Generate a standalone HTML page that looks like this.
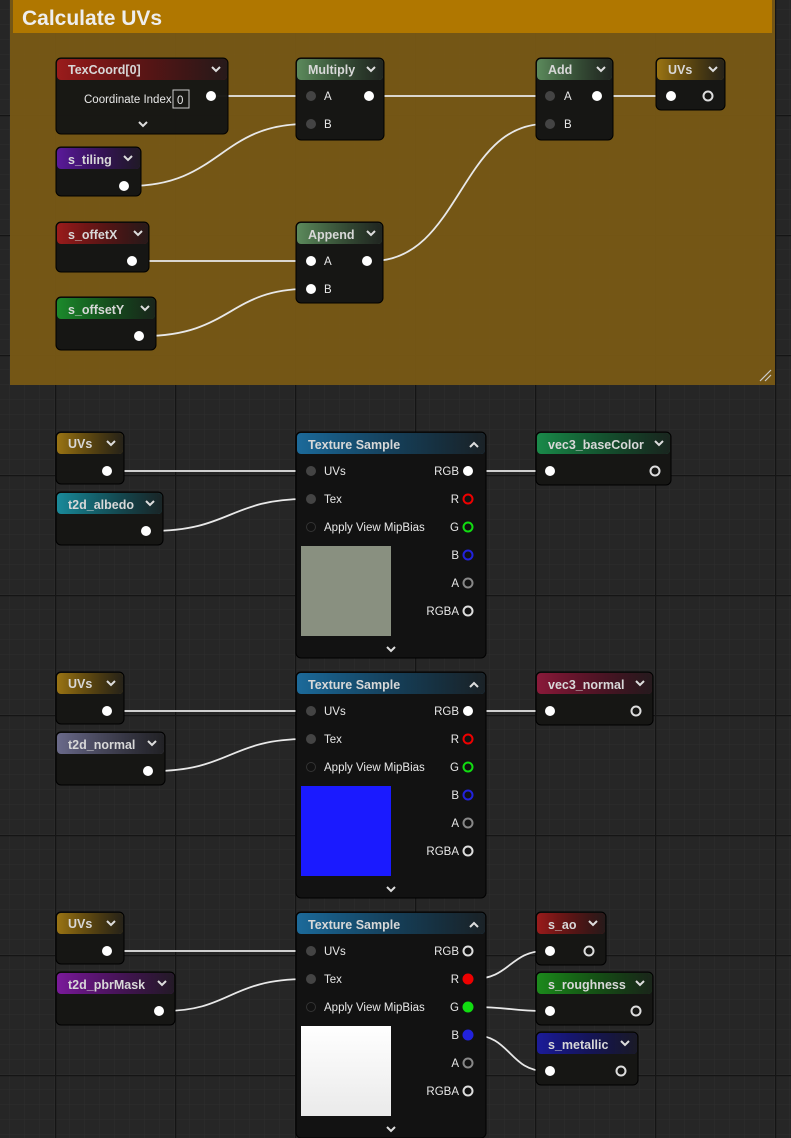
<!DOCTYPE html>
<html><head><meta charset="utf-8"><style>
html,body{margin:0;padding:0;background:#262626;width:791px;height:1138px;overflow:hidden}
svg{display:block;font-family:"Liberation Sans",sans-serif}
.t{fill:#d8d8d8;font-size:12.5px;font-weight:bold}
.l{fill:#e8e8e8;font-size:11.5px}
.w{fill:none;stroke:#e8e8e8;stroke-width:1.8}
</style></head><body>
<svg width="791" height="1138" viewBox="0 0 791 1138">
<defs>
<pattern id="g" width="15" height="15" patternUnits="userSpaceOnUse" x="10" y="10">
<path d="M15 0V15M0 15H15" stroke="#2e2e2e" stroke-width="1"/></pattern>
<pattern id="G" width="120" height="120" patternUnits="userSpaceOnUse" x="55" y="115">
<path d="M0.5 0V120M0 0.5H120" stroke="#151515" stroke-width="1.5"/></pattern>
<linearGradient id="fade" x1="0" x2="1"><stop offset="0" stop-color="#000" stop-opacity="0"/><stop offset="1" stop-color="#1a1a1a" stop-opacity="0.9"/></linearGradient>
</defs>
<rect width="791" height="1138" fill="#262626"/>
<rect width="791" height="1138" fill="url(#g)"/>
<rect width="791" height="1138" fill="url(#G)"/>
<!-- comment -->
<rect x="10" y="0" width="765" height="385" fill="#7b5a14" opacity="0.93"/>
<rect x="13" y="0" width="759" height="33" fill="#b07700"/>
<text x="22" y="25" fill="#eee" font-size="21" font-weight="bold">Calculate UVs</text>
<path d="M760 381L771 370M765 381L771 375" stroke="#ccc" stroke-width="1.2"/>

<g class="w">
<path d="M216 96H306"/>
<path d="M129 186C220 186 220 124 306 124"/>
<path d="M374 96H545"/>
<path d="M372 261C460 261 460 124 545 124"/>
<path d="M137 261H306"/>
<path d="M144 336C230 336 230 289 306 289"/>
<path d="M602 96H666"/>
<path d="M112 471H306"/>
<path d="M151 531C230 531 230 499 306 499"/>
<path d="M473 471H545"/>
<path d="M112 711H306"/>
<path d="M153 771C230 771 230 739 306 739"/>
<path d="M473 711H545"/>
<path d="M112 951H306"/>
<path d="M164 1011C230 1011 230 979 306 979"/>
<path d="M473 979C510 979 510 951 545 951"/>
<path d="M473 1007C510 1007 510 1011 545 1011"/>
<path d="M473 1035C510 1035 510 1071 545 1071"/>
</g>

<g id="nodes">
<rect x="56" y="58" width="172" height="76" rx="5" fill="#161614" stroke="#000" opacity="0.97"/>
<rect x="57" y="59" width="170" height="21" rx="4" fill="#9a1c1c"/><rect x="57" y="59" width="170" height="21" rx="4" fill="url(#fade)"/>
<text x="68" y="74" class="t">TexCoord[0]</text>
<text x="84" y="103" class="l">Coordinate Index</text>
<rect x="173" y="90" width="16" height="18" fill="none" stroke="#ccc"/><text x="177" y="104" class="l">0</text>
<rect x="296" y="58" width="88" height="82" rx="5" fill="#161614" stroke="#000"/>
<rect x="297" y="59" width="86" height="21" rx="4" fill="#5c8a5c"/><rect x="297" y="59" width="86" height="21" rx="4" fill="url(#fade)"/>
<text x="308" y="74" class="t">Multiply</text>
<text x="324" y="100" class="l">A</text><text x="324" y="128" class="l">B</text>
<rect x="56" y="147" width="85" height="49" rx="5" fill="#161614" stroke="#000"/>
<rect x="57" y="148" width="83" height="21" rx="4" fill="#5a1a9a"/><rect x="57" y="148" width="83" height="21" rx="4" fill="url(#fade)"/>
<text x="68" y="164" class="t">s_tiling</text>
<rect x="536" y="58" width="77" height="82" rx="5" fill="#161614" stroke="#000"/>
<rect x="537" y="59" width="75" height="21" rx="4" fill="#5c8a5c"/><rect x="537" y="59" width="75" height="21" rx="4" fill="url(#fade)"/>
<text x="548" y="74" class="t">Add</text>
<text x="564" y="100" class="l">A</text><text x="564" y="128" class="l">B</text>
<rect x="656" y="58" width="69" height="52" rx="5" fill="#161614" stroke="#000"/>
<rect x="657" y="59" width="67" height="21" rx="4" fill="#9a7414"/><rect x="657" y="59" width="67" height="21" rx="4" fill="url(#fade)"/>
<text x="668" y="74" class="t">UVs</text>
<rect x="56" y="222" width="93" height="50" rx="5" fill="#161614" stroke="#000"/>
<rect x="57" y="223" width="91" height="21" rx="4" fill="#9a1c1c"/><rect x="57" y="223" width="91" height="21" rx="4" fill="url(#fade)"/>
<text x="68" y="239" class="t">s_offetX</text>
<rect x="296" y="222" width="87" height="81" rx="5" fill="#161614" stroke="#000"/>
<rect x="297" y="223" width="85" height="21" rx="4" fill="#5c8a5c"/><rect x="297" y="223" width="85" height="21" rx="4" fill="url(#fade)"/>
<text x="308" y="239" class="t">Append</text>
<text x="324" y="265" class="l">A</text><text x="324" y="293" class="l">B</text>
<rect x="56" y="297" width="100" height="53" rx="5" fill="#161614" stroke="#000"/>
<rect x="57" y="298" width="98" height="21" rx="4" fill="#1c8a2c"/><rect x="57" y="298" width="98" height="21" rx="4" fill="url(#fade)"/>
<text x="68" y="314" class="t">s_offsetY</text>
</g>

<g id="grp">
<rect x="56" y="432" width="68" height="52" rx="5" fill="#161614" stroke="#000"/>
<rect x="57" y="433" width="66" height="21" rx="4" fill="#9a7414"/><rect x="57" y="433" width="66" height="21" rx="4" fill="url(#fade)"/>
<text x="68" y="448" class="t">UVs</text>
<rect x="296" y="432" width="190" height="226" rx="5" fill="#121212" stroke="#000"/>
<rect x="297" y="433" width="188" height="21" rx="4" fill="#1c6a9a"/><rect x="297" y="433" width="188" height="21" rx="4" fill="url(#fade)"/>
<text x="308" y="449" class="t">Texture Sample</text>
<path d="M470 447l4-4 4 4" stroke="#ddd" stroke-width="2" fill="none"/>
<text x="324" y="475" class="l">UVs</text>
<text x="324" y="503" class="l">Tex</text>
<text x="324" y="531" class="l">Apply View MipBias</text>
<text x="459" y="475" class="l" text-anchor="end">RGB</text>
<text x="459" y="503" class="l" text-anchor="end">R</text>
<text x="459" y="531" class="l" text-anchor="end">G</text>
<text x="459" y="559" class="l" text-anchor="end">B</text>
<text x="459" y="587" class="l" text-anchor="end">A</text>
<text x="459" y="615" class="l" text-anchor="end">RGBA</text>
<path d="M387 647l4 4 4-4" stroke="#ddd" stroke-width="2" fill="none"/>
<circle cx="311" cy="471" r="5" fill="#444"/><circle cx="311" cy="499" r="5" fill="#444"/>
<circle cx="311" cy="527" r="4.5" fill="#111" stroke="#333"/>
<circle cx="468" cy="471" r="5" fill="#fff"/>
<circle cx="468" cy="499" r="4.5" fill="none" stroke="#e00" stroke-width="2"/>
<circle cx="468" cy="527" r="4.5" fill="none" stroke="#1d1" stroke-width="2"/>
<circle cx="468" cy="555" r="4.5" fill="none" stroke="#22d" stroke-width="2"/>
<circle cx="468" cy="583" r="4.5" fill="none" stroke="#888" stroke-width="2"/>
<circle cx="468" cy="611" r="4.5" fill="none" stroke="#ddd" stroke-width="2"/>
<circle cx="107" cy="471" r="5" fill="#fff"/>
</g>
<use href="#grp" y="240"/>
<use href="#grp" y="480"/>
<rect x="301" y="546" width="90" height="90" fill="#899080"/>
<rect x="301" y="786" width="90" height="90" fill="#1a1aff"/>
<defs><linearGradient id="wg" x1="0" y1="0" x2="0" y2="1"><stop offset="0" stop-color="#fff"/><stop offset="1" stop-color="#eaeaea"/></linearGradient></defs>
<rect x="301" y="1026" width="90" height="90" fill="url(#wg)"/>
<circle cx="468" cy="979" r="5" fill="#e00"/><circle cx="468" cy="1007" r="5" fill="#1d1"/><circle cx="468" cy="1035" r="5" fill="#22d"/>
<circle cx="468" cy="951" r="4.5" fill="#121212" stroke="#ddd" stroke-width="2"/>

<g>
<rect x="56" y="492" width="107" height="53" rx="5" fill="#161614" stroke="#000"/>
<rect x="57" y="493" width="105" height="21" rx="4" fill="#1a8a9a"/><rect x="57" y="493" width="105" height="21" rx="4" fill="url(#fade)"/>
<text x="68" y="509" class="t">t2d_albedo</text>
<rect x="56" y="732" width="109" height="53" rx="5" fill="#161614" stroke="#000"/>
<rect x="57" y="733" width="107" height="21" rx="4" fill="#6a6a8a"/><rect x="57" y="733" width="107" height="21" rx="4" fill="url(#fade)"/>
<text x="68" y="749" class="t">t2d_normal</text>
<rect x="56" y="972" width="119" height="53" rx="5" fill="#161614" stroke="#000"/>
<rect x="57" y="973" width="117" height="21" rx="4" fill="#7a1a9a"/><rect x="57" y="973" width="117" height="21" rx="4" fill="url(#fade)"/>
<text x="68" y="989" class="t">t2d_pbrMask</text>
<rect x="536" y="432" width="135" height="53" rx="5" fill="#161614" stroke="#000"/>
<rect x="537" y="433" width="133" height="21" rx="4" fill="#1a8a4a"/><rect x="537" y="433" width="133" height="21" rx="4" fill="url(#fade)"/>
<text x="548" y="449" class="t">vec3_baseColor</text>
<rect x="536" y="672" width="117" height="53" rx="5" fill="#161614" stroke="#000"/>
<rect x="537" y="673" width="115" height="21" rx="4" fill="#8a1a3a"/><rect x="537" y="673" width="115" height="21" rx="4" fill="url(#fade)"/>
<text x="548" y="689" class="t">vec3_normal</text>
<rect x="536" y="912" width="70" height="53" rx="5" fill="#161614" stroke="#000"/>
<rect x="537" y="913" width="68" height="21" rx="4" fill="#9a1c1c"/><rect x="537" y="913" width="68" height="21" rx="4" fill="url(#fade)"/>
<text x="548" y="929" class="t">s_ao</text>
<rect x="536" y="972" width="117" height="53" rx="5" fill="#161614" stroke="#000"/>
<rect x="537" y="973" width="115" height="21" rx="4" fill="#1c8a1c"/><rect x="537" y="973" width="115" height="21" rx="4" fill="url(#fade)"/>
<text x="548" y="989" class="t">s_roughness</text>
<rect x="536" y="1032" width="102" height="53" rx="5" fill="#161614" stroke="#000"/>
<rect x="537" y="1033" width="100" height="21" rx="4" fill="#1c1c9a"/><rect x="537" y="1033" width="100" height="21" rx="4" fill="url(#fade)"/>
<text x="548" y="1049" class="t">s_metallic</text>
</g>

<g stroke="#ddd" stroke-width="2" fill="none">
<path d="M212 67l4 4 4-4M367 67l4 4 4-4M597 67l4 4 4-4M709 67l4 4 4-4M124 156l4 4 4-4M134 231l4 4 4-4M367 231l4 4 4-4M141 306l4 4 4-4M139 122l4 4 4-4"/>
<path d="M107 441l4 4 4-4M107 681l4 4 4-4M107 921l4 4 4-4M146 501l4 4 4-4M148 741l4 4 4-4M158 981l4 4 4-4"/>
<path d="M655 441l4 4 4-4M636 681l4 4 4-4M589 921l4 4 4-4M636 981l4 4 4-4M621 1041l4 4 4-4"/>
</g>

<g fill="#fff">
<circle cx="211" cy="96" r="5"/><circle cx="369" cy="96" r="5"/><circle cx="124" cy="186" r="5"/>
<circle cx="597" cy="96" r="5"/><circle cx="671" cy="96" r="5"/><circle cx="132" cy="261" r="5"/>
<circle cx="367" cy="261" r="5"/><circle cx="311" cy="261" r="5"/><circle cx="311" cy="289" r="5"/><circle cx="139" cy="336" r="5"/>
<circle cx="146" cy="531" r="5"/><circle cx="148" cy="771" r="5"/><circle cx="159" cy="1011" r="5"/>
<circle cx="550" cy="471" r="5"/><circle cx="550" cy="711" r="5"/><circle cx="550" cy="951" r="5"/><circle cx="550" cy="1011" r="5"/><circle cx="550" cy="1071" r="5"/>
</g>
<g fill="#444"><circle cx="311" cy="96" r="5"/><circle cx="311" cy="124" r="5"/><circle cx="550" cy="96" r="5"/><circle cx="550" cy="124" r="5"/></g>
<g fill="none" stroke="#ddd" stroke-width="2">
<circle cx="708" cy="96" r="4.5"/><circle cx="655" cy="471" r="4.5"/><circle cx="636" cy="711" r="4.5"/>
<circle cx="589" cy="951" r="4.5"/><circle cx="636" cy="1011" r="4.5"/><circle cx="621" cy="1071" r="4.5"/>
</g>
</svg>
</body></html>
